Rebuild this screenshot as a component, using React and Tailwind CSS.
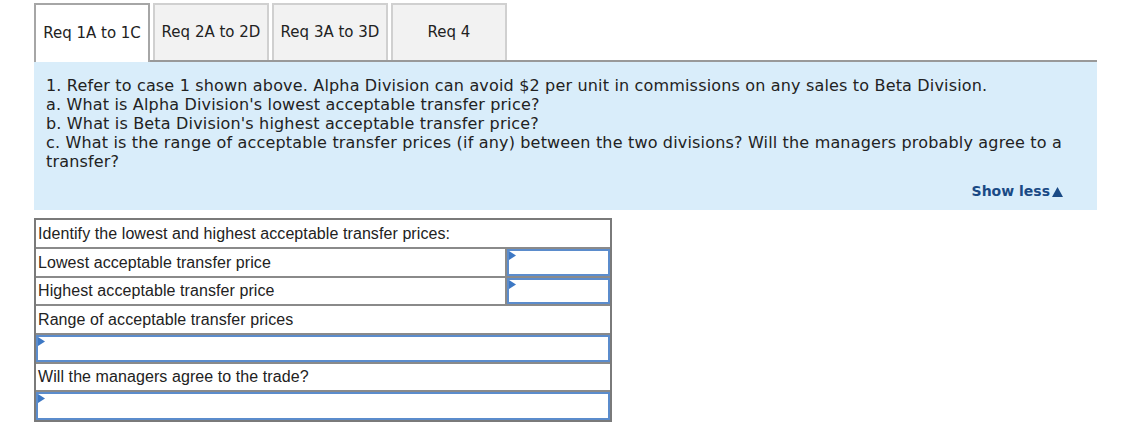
const Arrow = () => (
  <svg className="absolute left-0 top-0" width="7" height="9" viewBox="0 0 7 9">
    <path d="M0 0 L7 4.5 L0 9 Z" fill="#3d78c4" />
  </svg>
);

const InputBox = ({ className = '' }) => (
  <div className={`relative bg-white border-2 border-[#5b8ccc] ${className}`}>
    <Arrow />
  </div>
);

const tabs = ['Req 1A to 1C', 'Req 2A to 2D', 'Req 3A to 3D', 'Req 4'];

export default function App() {
  return (
    <div className="w-[1123px] h-[427px] bg-white overflow-hidden pl-[34px] pt-[3px]" style={{ fontFamily: '"DejaVu Sans", Verdana, sans-serif' }}>
      {/* tabs */}
      <div className="flex items-end gap-[3px] w-[1063px] border-b-2 border-[#999]">
        {tabs.map((t, i) =>
          i === 0 ? (
            <div key={t} className="w-[116px] h-[59px] -mb-[2px] bg-white border-2 border-b-0 border-[#a6a6a6] flex items-center justify-center text-[15px] text-[#222]">
              {t}
            </div>
          ) : (
            <div key={t} className="w-[116px] h-[57px] bg-[#f2f2f2] border-2 border-b-0 border-[#d0d0d0] flex items-center justify-center text-[15px] text-[#222]">
              {t}
            </div>
          )
        )}
      </div>

      {/* question panel */}
      <div className="w-[1063px] h-[148px] bg-[#d9edfa] pl-[12px] pr-[12px] pt-[14px] relative">
        <div className="text-[16px] leading-[19px] tracking-[0.17px] text-[#222] whitespace-nowrap">
          <div>1. Refer to case 1 shown above. Alpha Division can avoid $2 per unit in commissions on any sales to Beta Division.</div>
          <div>a. What is Alpha Division's lowest acceptable transfer price?</div>
          <div>b. What is Beta Division's highest acceptable transfer price?</div>
          <div>c. What is the range of acceptable transfer prices (if any) between the two divisions? Will the managers probably agree to a</div>
          <div>transfer?</div>
        </div>
        <div className="absolute right-[34px] top-[119px] flex items-center gap-[2px] text-[14px] font-bold text-[#1a4a85]">
          Show less
          <svg width="11" height="10" viewBox="0 0 11 10"><path d="M5.5 0 L11 10 L0 10 Z" fill="#1a4a85" /></svg>
        </div>
      </div>

      {/* answer table */}
      <div className="mt-[8px] w-[578px] border-2 border-[#7a7a7a] text-[16px] tracking-[0.08px] text-[#222]" style={{ fontFamily: '"Liberation Sans", Arial, sans-serif' }}>
        <div className="h-[29px] flex items-center pl-[2px] border-b-2 border-[#8a8a8a]">Identify the lowest and highest acceptable transfer prices:</div>
        <div className="h-[29px] flex border-b-2 border-[#8a8a8a]">
          <div className="flex-1 flex items-center pl-[2px] border-r-2 border-[#8a8a8a]">Lowest acceptable transfer price</div>
          <InputBox className="w-[103px]" />
        </div>
        <div className="h-[28px] flex border-b-2 border-[#8a8a8a]">
          <div className="flex-1 flex items-center pl-[2px] border-r-2 border-[#8a8a8a]">Highest acceptable transfer price</div>
          <InputBox className="w-[103px]" />
        </div>
        <div className="h-[29px] flex items-center pl-[2px] border-b-2 border-[#8a8a8a]">Range of acceptable transfer prices</div>
        <div className="h-[29px] border-b-2 border-[#8a8a8a] flex">
          <InputBox className="flex-1" />
        </div>
        <div className="h-[28px] flex items-center pl-[2px] border-b-2 border-[#8a8a8a]">Will the managers agree to the trade?</div>
        <div className="h-[28px] flex">
          <InputBox className="flex-1" />
        </div>
      </div>
    </div>
  );
}
